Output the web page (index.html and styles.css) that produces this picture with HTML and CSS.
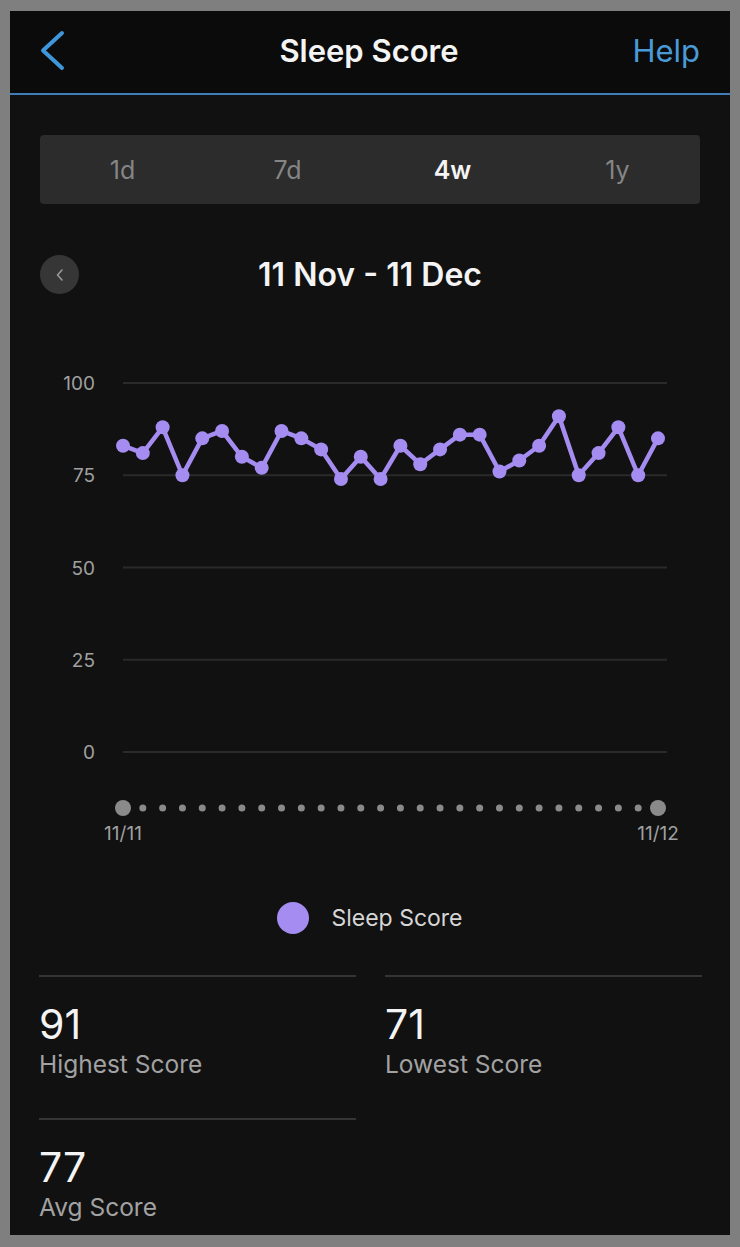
FILE: index.html
```html
<!DOCTYPE html>
<html lang="en">
<head>
    <meta charset="UTF-8">
    <meta name="viewport" content="width=device-width, initial-scale=1.0">
    <title>Sleep Score</title>
    <link rel="stylesheet" href="styles.css">
</head>
<body>

    <div class="screen">

        <!-- шапка -->
        <div class="top-bar">
            <button class="back-btn">
                <svg width="30" height="44" viewBox="0 0 30 44">
                    <path d="M 24 5 L 5 22.5 L 24 40" fill="none" stroke="#3f97db" stroke-width="4" stroke-linecap="round" stroke-linejoin="round"/>
                </svg>
            </button>
            <h1 class="top-title">Sleep Score</h1>
            <a class="help-link">Help</a>
        </div>

        <!-- периоды -->
        <div class="period-tabs">
            <div class="tab">1d</div>
            <div class="tab">7d</div>
            <div class="tab active">4w</div>
            <div class="tab">1y</div>
        </div>

        <!-- даты -->
        <div class="date-row">
            <button class="prev-btn">
                <svg width="10" height="14" viewBox="0 0 10 14">
                    <path d="M 7 2 L 2.5 7 L 7 12" fill="none" stroke="#9a9a9a" stroke-width="1.6" stroke-linecap="round" stroke-linejoin="round"/>
                </svg>
            </button>
            <div class="date-title">11 Nov - 11 Dec</div>
            <div></div>
        </div>

        <!-- график -->
        <svg class="chart" id="chart" width="720" height="490" viewBox="10 360 720 490"></svg>

        <!-- легенда -->
        <div class="legend">
            <span class="legend-dot"></span>
            <span class="legend-text">Sleep Score</span>
        </div>

        <!-- статистика -->
        <div class="stats">
            <div class="stat">
                <div class="stat-value">91</div>
                <div class="stat-label">Highest Score</div>
            </div>
            <div class="stat">
                <div class="stat-value">71</div>
                <div class="stat-label">Lowest Score</div>
            </div>
            <div class="stat">
                <div class="stat-value">77</div>
                <div class="stat-label">Avg Score</div>
            </div>
        </div>

    </div>

    <script>
        // Данные сна за 4 недели
        const scores = [83, 81, 88, 75, 85, 87, 80, 77, 87, 85, 82, 74, 80, 74,
                        83, 78, 82, 86, 86, 76, 79, 83, 91, 75, 81, 88, 75, 85];

        const chart = document.getElementById('chart');
        const NS = 'http://www.w3.org/2000/svg';
        const left = 123, right = 658, gridRight = 667;
        const zeroY = 752, perPoint = 3.69;
        const step = (right - left) / (scores.length - 1);

        function el(name, attrs, text) {
            const node = document.createElementNS(NS, name);
            for (const k in attrs) node.setAttribute(k, attrs[k]);
            if (text) node.textContent = text;
            chart.appendChild(node);
            return node;
        }

        // Сетка и подписи оси Y
        [100, 75, 50, 25, 0].forEach(v => {
            const y = zeroY - v * perPoint;
            el('line', { x1: left, x2: gridRight, y1: y, y2: y, class: 'grid-line' });
            el('text', { x: 95, y: y + 7, class: 'axis-label', 'text-anchor': 'end' }, String(v));
        });

        // Линия графика
        const pts = scores.map((s, i) => [left + i * step, zeroY - s * perPoint]);
        el('polyline', { points: pts.map(p => p.join(',')).join(' '), class: 'score-line' });
        pts.forEach(p => el('circle', { cx: p[0], cy: p[1], r: 7, class: 'score-dot' }));

        // Точки по дням
        scores.forEach((s, i) => {
            const big = i === 0 || i === scores.length - 1;
            el('circle', { cx: left + i * step, cy: 808, r: big ? 8 : 3.5, class: 'day-dot' });
        });

        el('text', { x: left, y: 840, class: 'date-label', 'text-anchor': 'middle' }, '11/11');
        el('text', { x: right, y: 840, class: 'date-label', 'text-anchor': 'middle' }, '11/12');
    </script>
</body>
</html>
```

FILE: styles.css
```css
/* Сброс */
* {
    margin: 0;
    padding: 0;
    box-sizing: border-box;
    font-family: Inter, "Liberation Sans", sans-serif;
}

body {
    background-color: #7f7f7f;
    padding: 11px 10px 12px;
}

/* Экран */
.screen {
    width: 720px;
    height: 1224px;
    background-color: #111111;
    overflow: hidden;
}

/* Шапка */
.top-bar {
    height: 84px;
    display: grid;
    grid-template-columns: 120px 1fr 120px;
    align-items: center;
    background-color: #0b0b0b;
    border-bottom: 2px solid #3e7db5;
    padding: 0 30px 4px 28px;
}

.back-btn {
    background: none;
    border: none;
    width: 30px;
    height: 44px;
    display: flex;
    cursor: pointer;
}

.top-title {
    text-align: center;
    color: #f4f4f4;
    font-size: 31px;
    font-weight: 600;
}

.help-link {
    justify-self: end;
    color: #4a9ad8;
    font-size: 31px;
    cursor: pointer;
}

/* Переключатель периодов */
.period-tabs {
    margin: 40px 30px 0;
    height: 69px;
    background-color: #2c2c2c;
    border-radius: 4px;
    display: grid;
    grid-template-columns: repeat(4, 1fr);
    align-items: center;
}

.tab {
    text-align: center;
    font-size: 25px;
    color: #858585;
}

.tab.active {
    color: #f4f4f4;
    font-weight: 600;
}

/* Диапазон дат */
.date-row {
    margin: 51px 30px 0;
    height: 39px;
    display: grid;
    grid-template-columns: 39px 1fr 39px;
    align-items: center;
}

.prev-btn {
    width: 39px;
    height: 39px;
    border-radius: 50%;
    border: none;
    background-color: #363636;
    display: flex;
    align-items: center;
    justify-content: center;
}

.date-title {
    text-align: center;
    color: #f4f4f4;
    font-size: 32px;
    font-weight: 600;
}

/* График */
.chart {
    display: block;
    margin-top: 66px;
}

.grid-line {
    stroke: #2a2a2a;
    stroke-width: 2;
}

.axis-label {
    fill: #a0a0a0;
    font-size: 19px;
}

.score-line {
    fill: none;
    stroke: #a48cf0;
    stroke-width: 4.5;
    stroke-linejoin: round;
}

.score-dot {
    fill: #a48cf0;
}

.day-dot {
    fill: #8a8a8a;
}

.date-label {
    fill: #a0a0a0;
    font-size: 19px;
}

/* Легенда */
.legend {
    margin-top: 52px;
    display: flex;
    justify-content: center;
    align-items: center;
    gap: 22px;
}

.legend-dot {
    width: 32px;
    height: 32px;
    border-radius: 50%;
    background-color: #a48cf0;
}

.legend-text {
    font-size: 23px;
    color: #d6d6d6;
}

/* Статистика */
.stats {
    margin-top: 41px;
    padding: 0 28px 0 29px;
    display: grid;
    grid-template-columns: 1fr 1fr;
    column-gap: 29px;
    row-gap: 40px;
}

.stat {
    border-top: 2px solid #353535;
    padding-top: 23px;
}

.stat-value {
    font-size: 41px;
    line-height: 48px;
    color: #f4f4f4;
}

.stat-label {
    margin-top: 2px;
    font-size: 24.5px;
    line-height: 28px;
    color: #a2a2a2;
}
```
